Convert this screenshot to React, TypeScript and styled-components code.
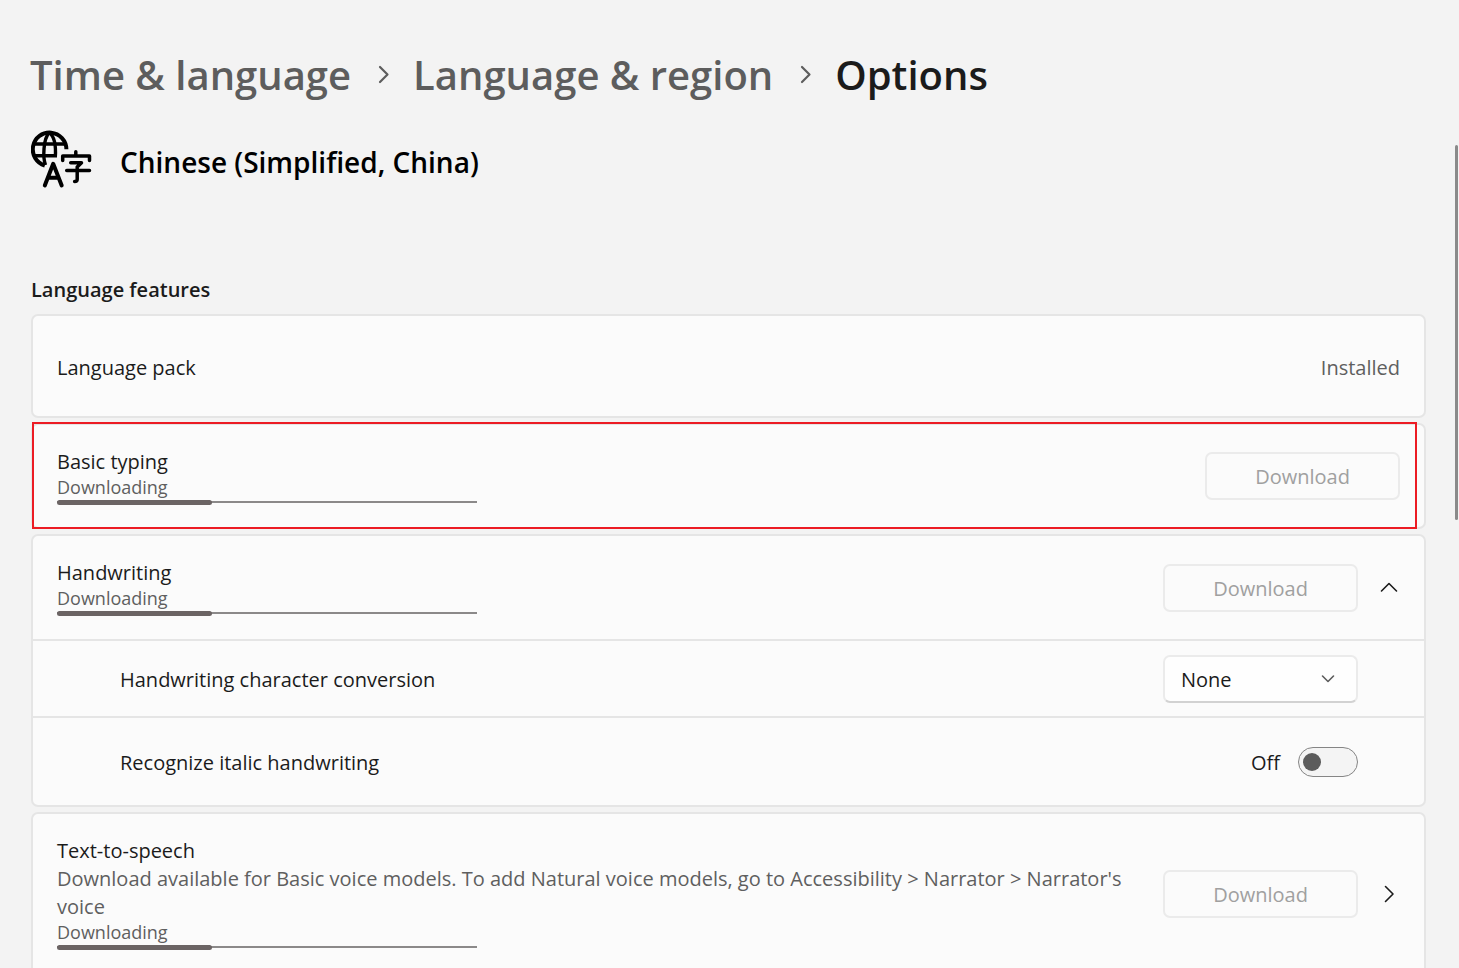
import React from "react";
import styled, { createGlobalStyle } from "styled-components";

const GlobalStyle = createGlobalStyle`
  *, *::before, *::after { box-sizing: border-box; }
  html { scrollbar-width: none; }
  body {
    margin: 0;
    background: #f3f3f3;
    color: #1b1b1b;
    font-family: "Segoe UI", "Open Sans", "Noto Sans", sans-serif;
    font-size: 20px;
    line-height: 28px;
  }
`;

const Page = styled.main`
  padding: 47px 33px 24px 31px;
`;

const Breadcrumb = styled.nav`
  display: flex;
  align-items: center;
  height: 56px;
  margin-left: -1px;
  font-size: 40px;
  line-height: 56px;
  font-weight: 600;
  white-space: nowrap;
`;

const CrumbLink = styled.a`
  color: #5d5d5d;
  text-decoration: none;
`;

const CrumbSeparator = styled.svg`
  flex: none;
  width: 12px;
  height: 20px;
  margin: 0 23px 0 27px;
`;

const CrumbCurrent = styled.h1`
  margin: 0;
  font: inherit;
`;

const LanguageHeader = styled.header`
  display: flex;
  align-items: center;
  gap: 28px;
  height: 60px;
  margin-top: 27px;
  color: #000;
`;

const LanguageName = styled.h2`
  margin: 0;
  padding-top: 4px;
  font-size: 28px;
  line-height: 40px;
  font-weight: 600;
`;

const SectionTitle = styled.h3`
  margin: 85px 0 10px;
  font-size: 20px;
  line-height: 29px;
  font-weight: 600;
`;

const CardList = styled.div`
  display: flex;
  flex-direction: column;
  gap: 5px;
`;

const Card = styled.section`
  position: relative;
  border: 2px solid #e5e5e5;
  border-radius: 7px;
  background: #fbfbfb;
`;

const Highlight = styled.div`
  position: absolute;
  inset: -3px 7px -2px -1px;
  border: 2px solid #ec1c24;
  pointer-events: none;
`;

const Row = styled.div<{ $height: number; $nested?: boolean }>`
  display: flex;
  align-items: center;
  justify-content: space-between;
  min-height: ${(p) => p.$height}px;
  padding: ${(p) => (p.$nested ? "0 66px 0 87px" : "22px 24px")};

  & + & {
    border-top: 2px solid #e5e5e5;
  }
`;

const Info = styled.div`
  flex: 1;
  min-width: 0;
  padding-right: 32px;
`;

const Controls = styled.div`
  display: flex;
  flex: none;
  align-items: center;
  gap: 20px;
`;

const Name = styled.div``;

const RowText = styled.span<{ $muted?: boolean }>`
  padding-top: 3px;
  color: ${(p) => (p.$muted ? "#5f5f5f" : "inherit")};
`;

const Description = styled.div`
  color: #5f5f5f;
`;

const State = styled.div`
  height: 24px;
  color: #5f5f5f;
  font-size: 18px;
  line-height: 22px;
`;

const Track = styled.div`
  display: flex;
  align-items: center;
  width: 420px;
  max-width: 100%;
  height: 5px;
  background: linear-gradient(#8b8989, #8b8989) 0 1px / 100% 2px no-repeat;
`;

const Fill = styled.div`
  height: 5px;
  border-radius: 3px;
  background: #6b6464;
`;

const DownloadButton = styled.button`
  width: 195px;
  height: 48px;
  padding: 2px 0 0;
  border: 2px solid #ebebeb;
  border-radius: 7px;
  background: #fbfbfb;
  color: #a0a0a0;
  font: inherit;
`;

const ExpandButton = styled.button`
  display: flex;
  align-items: center;
  justify-content: center;
  width: 22px;
  height: 22px;
  padding: 0;
  border: 0;
  background: none;
  color: #1b1b1b;
`;

const SelectBox = styled.div`
  position: relative;
  width: 195px;
  height: 48px;

  svg {
    position: absolute;
    top: 15px;
    right: 21px;
    pointer-events: none;
  }
`;

const Select = styled.select`
  appearance: none;
  width: 100%;
  height: 100%;
  padding: 2px 48px 0 16px;
  border: 2px solid #ebebeb;
  border-bottom-color: #d2d2d2;
  border-radius: 7px;
  background: #fefefe;
  color: #1b1b1b;
  font: inherit;
`;

const SwitchLabel = styled.label`
  display: flex;
  align-items: center;
  gap: 18px;
`;

const Switch = styled.input`
  appearance: none;
  display: flex;
  align-items: center;
  width: 60px;
  height: 30px;
  margin: 0;
  padding: 0 4px;
  border: 1px solid #858585;
  border-radius: 15px;
  background: #f4f4f4;

  &::before {
    content: "";
    width: 18px;
    height: 18px;
    border-radius: 50%;
    background: #5c5c5c;
  }

  &:checked {
    justify-content: flex-end;
  }
`;

const ScrollThumb = styled.div`
  position: fixed;
  top: 145px;
  right: 1px;
  width: 3px;
  height: 375px;
  border-radius: 2px;
  background: #8a8a8a;
`;

const Separator = () => (
  <CrumbSeparator viewBox="0 0 12 20" fill="none" stroke="#5d5d5d" strokeWidth="2.2" aria-hidden="true">
    <path d="M2 2 9.500 9.500 2 17" strokeLinecap="round" strokeLinejoin="round" />
  </CrumbSeparator>
);

const Chevron = ({ d, color = "currentColor" }: { d: string; color?: string }) => (
  <svg width="18" height="18" viewBox="0 0 18 18" fill="none" stroke={color} strokeWidth="1.6" aria-hidden="true">
    <path d={d} strokeLinecap="round" strokeLinejoin="round" />
  </svg>
);

const LanguageIcon = () => (
  <svg width="61" height="60" viewBox="31 130 61 60" fill="none" stroke="currentColor" strokeWidth="4" strokeLinecap="round" strokeLinejoin="round" aria-hidden="true">
    <path strokeLinecap="butt" d="M66.400 149.300A16.800 16.800 0 1 0 44.800 165.500" />
    <g strokeWidth="3.4">
      <path strokeLinecap="butt" d="M34 144H66M34 155.700H57" />
      <path strokeLinecap="butt" d="M49.300 132.500C43 139 42.800 158 45.500 165M49.300 132.500C55 137 56 147 55.300 157" />
    </g>
    <path d="M44.800 185.500 53.200 163.800 61.700 185.500M48 177.700H58.500" />
    <path d="M62.700 160.500V156H89.500V160.500M75.800 151.800V155M70.700 162.800H81.500L77.200 167V179.300Q77.200 181.600 74.600 181.600M66.700 170.500H89.500" strokeWidth="3.5" />
  </svg>
);

const Progress = ({ label, value }: { label: string; value: number }) => (
  <>
    <State>Downloading</State>
    <Track role="progressbar" aria-label={label} aria-valuenow={value} aria-valuemin={0} aria-valuemax={100}>
      <Fill style={{ width: `${value}%` }} />
    </Track>
  </>
);

export default function App() {
  return (
    <>
      <GlobalStyle />
      <Page>
        <Breadcrumb aria-label="Breadcrumb">
          <CrumbLink href="#time-language">Time &amp; language</CrumbLink>
          <Separator />
          <CrumbLink href="#language-region">Language &amp; region</CrumbLink>
          <Separator />
          <CrumbCurrent>Options</CrumbCurrent>
        </Breadcrumb>

        <LanguageHeader>
          <LanguageIcon />
          <LanguageName>Chinese (Simplified, China)</LanguageName>
        </LanguageHeader>

        <SectionTitle>Language features</SectionTitle>
        <CardList>
          <Card>
            <Row $height={100}>
              <RowText>Language pack</RowText>
              <RowText $muted>Installed</RowText>
            </Row>
          </Card>

          <Card>
            <Row $height={102}>
              <Info>
                <Name>Basic typing</Name>
                <Progress label="Basic typing" value={37} />
              </Info>
              <DownloadButton disabled>Download</DownloadButton>
            </Row>
            <Highlight />
          </Card>

          <Card>
            <Row $height={103}>
              <Info>
                <Name>Handwriting</Name>
                <Progress label="Handwriting" value={37} />
              </Info>
              <Controls>
                <DownloadButton disabled>Download</DownloadButton>
                <ExpandButton aria-label="Collapse handwriting" aria-expanded="true">
                  <Chevron d="M1.500 12 9 4.500 16.500 12" />
                </ExpandButton>
              </Controls>
            </Row>
            <Row $height={77} $nested>
              <RowText as="label" htmlFor="conversion">Handwriting character conversion</RowText>
              <SelectBox>
                <Select id="conversion" defaultValue="None">
                  <option>None</option>
                </Select>
                <Chevron d="M3.500 6 9 11.500 14.500 6" color="#5c5c5c" />
              </SelectBox>
            </Row>
            <Row $height={89} $nested>
              <RowText as="label" htmlFor="italic">Recognize italic handwriting</RowText>
              <SwitchLabel>
                <RowText>Off</RowText>
                <Switch id="italic" type="checkbox" role="switch" />
              </SwitchLabel>
            </Row>
          </Card>

          <Card>
            <Row $height={159}>
              <Info>
                <Name>Text-to-speech</Name>
                <Description>
                  Download available for Basic voice models. To add Natural voice models, go to Accessibility &gt; Narrator &gt; Narrator's voice
                </Description>
                <Progress label="Text-to-speech" value={37} />
              </Info>
              <Controls>
                <DownloadButton disabled>Download</DownloadButton>
                <ExpandButton aria-label="Open text-to-speech">
                  <Chevron d="M5.500 1.500 13 9 5.500 16.500" />
                </ExpandButton>
              </Controls>
            </Row>
          </Card>
        </CardList>
      </Page>
      <ScrollThumb />
    </>
  );
}
